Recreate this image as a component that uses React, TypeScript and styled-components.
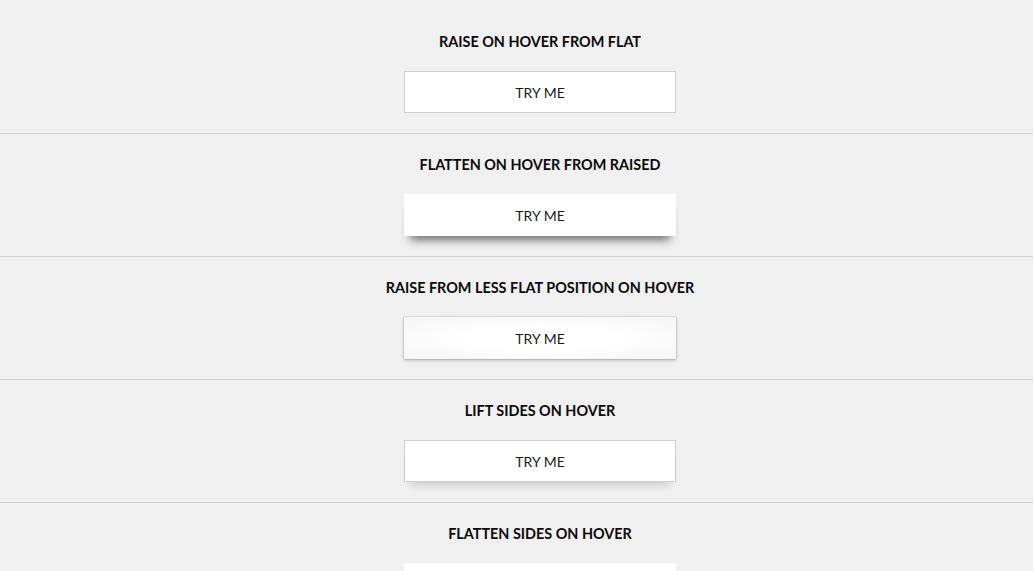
import React from "react";
import styled, { createGlobalStyle, css } from "styled-components";

const GlobalStyle = createGlobalStyle`
  html, body {
    margin: 0;
    padding: 0;
    background: #f0f0f0;
  }
  body {
    font-family: Lato, "Liberation Sans", sans-serif;
    color: #111;
  }
`;

const Page = styled.div`
  padding-top: 11px;
`;

const Section = styled.section`
  display: flex;
  flex-direction: column;
  align-items: center;
  gap: 18px;
  padding: 20px 0 20px 47px;
  border-bottom: 1px solid #d0d0d0;
`;

const Title = styled.h2`
  margin: 0;
  font-size: 14.4px;
  line-height: 22px;
  font-weight: 700;
  text-transform: uppercase;
  color: #0a0a0a;
`;

type Variant = "flat" | "raised" | "lessFlat" | "liftSides" | "flattenSides";

const variants: Record<Variant, ReturnType<typeof css>> = {
  flat: css`
    border: 1px solid #cfcfcf;
  `,
  raised: css`
    border: none;
    box-shadow: 0 10px 10px -6px rgba(0, 0, 0, 0.55);
  `,
  lessFlat: css`
    border: none;
    background: radial-gradient(ellipse at center, #ffffff 40%, #f4f4f4 100%);
    box-shadow: 0 1px 3px rgba(0, 0, 0, 0.3), 0 0 1px rgba(0, 0, 0, 0.25);
  `,
  liftSides: css`
    border: 1px solid #cfcfcf;
    box-shadow: 0 9px 10px -6px rgba(0, 0, 0, 0.16);
  `,
  flattenSides: css`
    border: none;
  `,
};

const TryButton = styled.button<{ $variant: Variant }>`
  box-sizing: border-box;
  width: 272px;
  height: 42px;
  background: #fff;
  font-family: inherit;
  font-size: 14px;
  color: #1a1a1a;
  text-transform: uppercase;
  cursor: pointer;
  ${({ $variant }) => variants[$variant]}
`;

const demos: { title: string; variant: Variant }[] = [
  { title: "Raise on hover from flat", variant: "flat" },
  { title: "Flatten on hover from raised", variant: "raised" },
  { title: "Raise from less flat position on hover", variant: "lessFlat" },
  { title: "Lift sides on hover", variant: "liftSides" },
  { title: "Flatten sides on hover", variant: "flattenSides" },
];

const App: React.FC = () => {
  return (
    <>
      <GlobalStyle />
      <Page>
        {demos.map((d) => (
          <Section key={d.variant}>
            <Title>{d.title}</Title>
            <TryButton $variant={d.variant}>Try me</TryButton>
          </Section>
        ))}
      </Page>
    </>
  );
};

export default App;
